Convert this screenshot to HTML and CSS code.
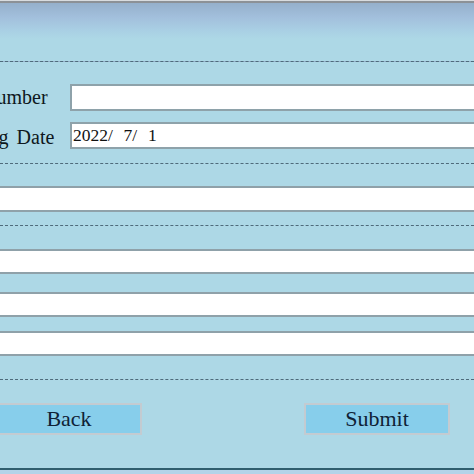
FILE: index.html
```html
<!DOCTYPE html>
<html>
<head>
<meta charset="utf-8">
<link rel="stylesheet" href="styles.css">
</head>
<body>
<div class="page">
  <div class="topbar"></div>
  <div class="header section"></div>
  <div class="form section">
    <div class="field">
      <label class="label label-number">Number</label>
      <input class="text-input" type="text" value="">
    </div>
    <div class="field">
      <label class="label label-date">Billing Date</label>
      <input class="text-input" type="text" value="2022/  7/  1">
    </div>
  </div>
  <div class="single section">
    <div class="band"></div>
  </div>
  <div class="multi section">
    <div class="band"></div>
    <div class="band band-mid"></div>
    <div class="band"></div>
  </div>
  <div class="actions">
    <button class="btn">Back</button>
    <button class="btn">Submit</button>
  </div>
  <div class="footer"></div>
</div>
</body>
</html>
```
FILE: styles.css
```css
html, body {
  margin: 0;
  padding: 0;
  background: #add8e6;
}
.page {
  width: 474px;
  height: 474px;
  overflow: hidden;
  background: #add8e6;
  font-family: "Liberation Serif", "Times New Roman", serif;
  color: #0e1720;
  display: flex;
  flex-direction: column;
}
.topbar {
  height: 1px;
  background: #d8dcdf;
  border-bottom: 2px solid #8c9196;
  flex: none;
}
.section {
  border-bottom: 1px dashed #4f6b7b;
  flex: none;
  box-sizing: border-box;
}
.header {
  height: 59px;
  background: linear-gradient(to bottom, #95b0cb 0px, #a2bfdc 14px, #a9d0e4 28px, #add8e6 36px, #add8e6 100%);
}
.form {
  height: 102px;
  padding-top: 22px;
  display: flex;
  flex-direction: column;
  gap: 11px;
}
.field {
  display: grid;
  grid-template-columns: 117px 420px;
  align-items: center;
  margin-left: -47px;
}
.label {
  font-size: 20px;
  white-space: nowrap;
}
.label-number {
  padding-left: 29px;
}
.label-date {
  word-spacing: 3px;
  padding-top: 3px;
}
.text-input {
  box-sizing: border-box;
  height: 27px;
  width: 420px;
  margin: 0;
  border: 2px solid #8ea2aa;
  background: #fff;
  padding: 0 0 0 1px;
  font-family: "Liberation Serif", "Times New Roman", serif;
  font-size: 17.5px;
  word-spacing: 1px;
  color: #111;
  white-space: pre;
  outline: none;
}
.single {
  height: 62px;
  padding-top: 22px;
}
.single .band {
  height: 26px;
}
.multi {
  height: 154px;
  padding-top: 23px;
  display: flex;
  flex-direction: column;
  gap: 18px;
}
.band {
  box-sizing: border-box;
  height: 25px;
  background: #fff;
  border-top: 2px solid #8fa1a9;
  border-bottom: 2px solid #8fa1a9;
  flex: none;
}
.band-mid {
  margin-bottom: -4px;
}
.actions {
  height: 90px;
  box-sizing: border-box;
  padding-top: 23px;
  display: flex;
  align-items: flex-start;
  gap: 162px;
  margin-left: -4px;
  border-bottom: 2px solid #2f5e6e;
  flex: none;
}
.btn {
  box-sizing: border-box;
  width: 146px;
  height: 32px;
  margin: 0;
  padding: 0;
  background: #87ceeb;
  border: 2px solid #c3cbd1;
  font-family: "Liberation Serif", "Times New Roman", serif;
  font-size: 22px;
  color: #0f2236;
}
.footer {
  flex: 1;
  background: #b3d3e8;
}
```
